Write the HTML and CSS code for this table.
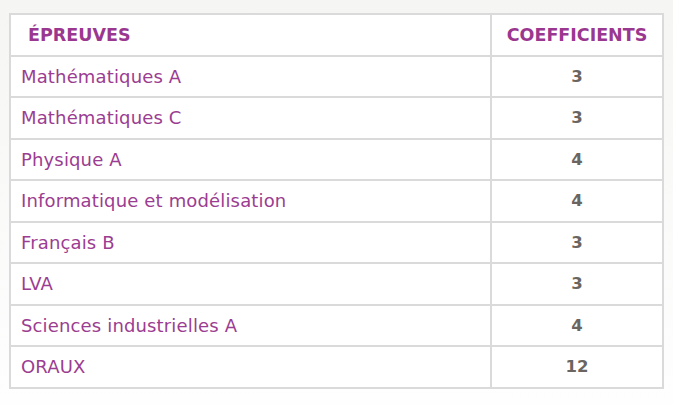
FILE: index.html
```html
<!DOCTYPE html>
<html lang="fr">
<head>
<meta charset="utf-8">
<title>Épreuves</title>
<link rel="stylesheet" href="styles.css">
</head>
<body>
<div class="page">
  <table class="coef">
    <thead>
      <tr><th class="c-name">ÉPREUVES</th><th class="c-coef">COEFFICIENTS</th></tr>
    </thead>
    <tbody>
      <tr><td class="c-name">Mathématiques A</td><td class="c-coef">3</td></tr>
      <tr><td class="c-name">Mathématiques C</td><td class="c-coef">3</td></tr>
      <tr><td class="c-name">Physique A</td><td class="c-coef">4</td></tr>
      <tr><td class="c-name">Informatique et modélisation</td><td class="c-coef">4</td></tr>
      <tr><td class="c-name">Français B</td><td class="c-coef">3</td></tr>
      <tr><td class="c-name">LVA</td><td class="c-coef">3</td></tr>
      <tr><td class="c-name">Sciences industrielles A</td><td class="c-coef">4</td></tr>
      <tr><td class="c-name">ORAUX</td><td class="c-coef">12</td></tr>
    </tbody>
  </table>
</div>
</body>
</html>
```
FILE: styles.css
```css
html, body {
  margin: 0;
  padding: 0;
}
body {
  width: 673px;
  height: 405px;
  overflow: hidden;
  background: linear-gradient(to bottom, #f5f5f3 0px, #f8f8f7 120px, #fefefe 405px);
  font-family: "DejaVu Sans", "Noto Sans", sans-serif;
}
.page {
  padding: 13px 9px 0 9px;
}
.coef {
  width: 655px;
  border-collapse: collapse;
  background: #ffffff;
  border: 2px solid #dadada;
}
.coef th, .coef td {
  border: 2px solid #dadada;
  height: 41.5px;
  padding: 0;
  box-sizing: border-box;
}
.coef th {
  font-size: 17.5px;
  font-weight: bold;
  color: #9a378f;
  text-align: left;
}
.coef th.c-name {
  padding-left: 17px;
}
.coef th.c-coef {
  text-align: center;
}
.coef td.c-name {
  width: 481px;
  padding-left: 10px;
  font-size: 18px;
  letter-spacing: 0.15px;
  color: #9b3d91;
}
.coef td.c-coef {
  text-align: center;
  font-size: 16.5px;
  font-weight: bold;
  color: #6a6561;
}
```
